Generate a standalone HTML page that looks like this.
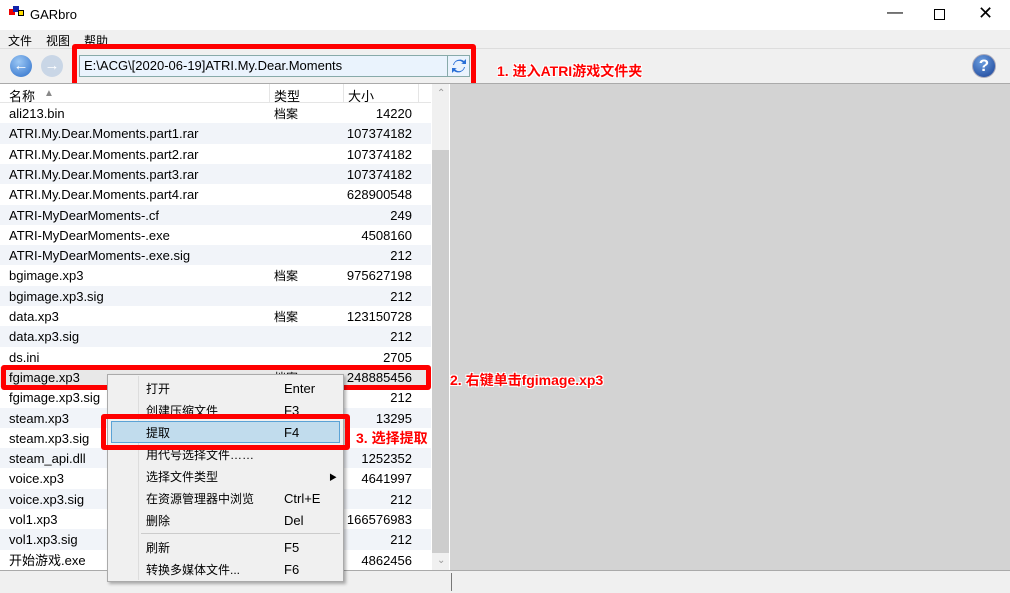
<!DOCTYPE html>
<html><head><meta charset="utf-8"><style>
*{margin:0;padding:0;box-sizing:border-box}
body{width:1010px;height:593px;position:relative;overflow:hidden;background:#f0f0f0;font-family:"Liberation Sans","Noto Sans CJK SC",sans-serif;font-size:12px;color:#000}
.a{position:absolute}
.row{position:absolute;left:0;width:431px;height:20.3px;line-height:22px;font-size:13px}
.row span{position:absolute}
.n{left:9px}.t{left:274px;font-size:12px}.s{right:19px}
.sh{background:#f1f4f9}
.ann{position:absolute;color:#f00;font-weight:bold;font-size:14px;text-shadow:1px 1px 0 #fff,-1px -1px 0 #fff,1px -1px 0 #fff,-1px 1px 0 #fff}
.redbox{position:absolute;border:5px solid #f00;border-radius:3px}
.mi{position:absolute;left:146px;height:22px;line-height:24px}
.mk{position:absolute;left:284px;line-height:24px;font-size:13px}
</style></head><body>
<div class="a" style="left:0;top:0;width:1010px;height:30px;background:#fff"></div>
<div class="a" style="left:9px;top:9px;width:6px;height:6px;background:#e00"></div>
<div class="a" style="left:13px;top:6px;width:6px;height:6px;background:#12a"></div>
<div class="a" style="left:18px;top:10px;width:6px;height:6px;background:#fd0;border:1px solid #000"></div>
<div class="a" style="left:30px;top:7px;font-size:13px">GARbro</div>
<div class="a" style="left:887px;top:4px;font-size:16px">&#8212;</div>
<div class="a" style="left:934px;top:9px;width:11px;height:11px;border:1px solid #000"></div>
<div class="a" style="left:978px;top:3px;font-size:18px">&#10005;</div>
<div class="a" style="left:8px;top:32px">文件</div>
<div class="a" style="left:46px;top:32px">视图</div>
<div class="a" style="left:84px;top:32px">帮助</div>
<div class="a" style="left:0;top:48px;width:1010px;height:1px;background:#ddd"></div>
<div class="a" style="left:10px;top:55px;width:22px;height:22px;border-radius:50%;background:radial-gradient(circle at 40% 30%,#9cc8f5,#2c6ec9);color:#fff;font-size:15px;text-align:center;line-height:21px;font-weight:bold">&#8592;</div>
<div class="a" style="left:41px;top:55px;width:22px;height:22px;border-radius:50%;background:#c9d6e6;color:#fff;font-size:15px;text-align:center;line-height:21px;font-weight:bold">&#8594;</div>
<div class="a" style="left:79px;top:55px;width:391px;height:22px;background:#eaf3fd;border:1px solid #8aa;"></div>
<div class="a" style="left:84px;top:58px;font-size:13px">E:\ACG\[2020-06-19]ATRI.My.Dear.Moments</div>
<div class="a" style="left:447px;top:55px;width:1px;height:22px;background:#8aa"></div>
<svg class="a" style="left:451px;top:58px" width="16" height="16" viewBox="0 0 16 16"><path d="M3 7a5 5 0 0 1 9-2l-2 1h5V1l-2 2A7 7 0 0 0 2 7z" fill="#2a6fd6"/><path d="M13 9a5 5 0 0 1-9 2l2-1H1v5l2-2a7 7 0 0 0 11-4z" fill="#2a6fd6"/></svg>
<div class="redbox" style="left:72px;top:44px;width:404px;height:44px"></div>
<div class="ann" style="left:497px;top:61px">1. 进入ATRI游戏文件夹</div>
<div class="a" style="left:972px;top:54px;width:24px;height:24px;border-radius:50%;background:radial-gradient(circle at 40% 30%,#6c9fe0,#173f95);border:1px solid #aab;color:#fff;font-weight:bold;font-size:17px;text-align:center;line-height:22px">?</div>
<div class="a" style="left:0;top:83px;width:1010px;height:1px;background:#aaa"></div>
<div class="a" style="left:0;top:84px;width:432px;height:486px;background:#fff"></div>
<div class="a" style="left:0;top:84px;width:431px;height:19px;border-bottom:1px solid #e5e5e5"></div>
<div class="a" style="left:9px;top:86px;font-size:13px">名称</div>
<div class="a" style="left:44px;top:88px;color:#888;font-size:10px">&#9650;</div>
<div class="a" style="left:269px;top:84px;width:1px;height:19px;background:#e5e5e5"></div>
<div class="a" style="left:274px;top:86px;font-size:13px">类型</div>
<div class="a" style="left:343px;top:84px;width:1px;height:19px;background:#e5e5e5"></div>
<div class="a" style="left:348px;top:86px;font-size:13px">大小</div>
<div class="a" style="left:418px;top:84px;width:1px;height:19px;background:#e5e5e5"></div>
<div class="a" style="left:432px;top:84px;width:17px;height:486px;background:#f0f0f0"></div>
<div class="a" style="left:432px;top:150px;width:17px;height:403px;background:#cdcdcd"></div>
<div class="a" style="left:437px;top:88px;color:#999;font-size:10px">&#8963;</div>
<div class="a" style="left:437px;top:555px;color:#999;font-size:10px">&#8964;</div>
<div class="a" style="left:449px;top:84px;width:1px;height:486px;background:#fff"></div>
<div class="a" style="left:450px;top:84px;width:560px;height:486px;background:#d3d3d3"></div>
<div class="a" style="left:0;top:570px;width:1010px;height:1px;background:#aaa"></div>
<div class="a" style="left:451px;top:573px;width:1px;height:18px;background:#777"></div>

<div class="row" style="top:103px"><span class="n">ali213.bin</span><span class="t">档案</span><span class="s">14220</span></div>
<div class="row sh" style="top:123.3px"><span class="n">ATRI.My.Dear.Moments.part1.rar</span><span class="s">107374182</span></div>
<div class="row" style="top:143.6px"><span class="n">ATRI.My.Dear.Moments.part2.rar</span><span class="s">107374182</span></div>
<div class="row sh" style="top:163.9px"><span class="n">ATRI.My.Dear.Moments.part3.rar</span><span class="s">107374182</span></div>
<div class="row" style="top:184.2px"><span class="n">ATRI.My.Dear.Moments.part4.rar</span><span class="s">628900548</span></div>
<div class="row sh" style="top:204.5px"><span class="n">ATRI-MyDearMoments-.cf</span><span class="s">249</span></div>
<div class="row" style="top:224.8px"><span class="n">ATRI-MyDearMoments-.exe</span><span class="s">4508160</span></div>
<div class="row sh" style="top:245.1px"><span class="n">ATRI-MyDearMoments-.exe.sig</span><span class="s">212</span></div>
<div class="row" style="top:265.4px"><span class="n">bgimage.xp3</span><span class="t">档案</span><span class="s">975627198</span></div>
<div class="row sh" style="top:285.7px"><span class="n">bgimage.xp3.sig</span><span class="s">212</span></div>
<div class="row" style="top:306px"><span class="n">data.xp3</span><span class="t">档案</span><span class="s">123150728</span></div>
<div class="row sh" style="top:326.3px"><span class="n">data.xp3.sig</span><span class="s">212</span></div>
<div class="row" style="top:346.6px"><span class="n">ds.ini</span><span class="s">2705</span></div>
<div class="row" style="top:366.9px;background:#e8e8e8"><span class="n">fgimage.xp3</span><span class="t">档案</span><span class="s">248885456</span></div>
<div class="row" style="top:387.2px"><span class="n">fgimage.xp3.sig</span><span class="s">212</span></div>
<div class="row sh" style="top:407.5px"><span class="n">steam.xp3</span><span class="s">13295</span></div>
<div class="row" style="top:427.8px"><span class="n">steam.xp3.sig</span><span class="s">212</span></div>
<div class="row sh" style="top:448.1px"><span class="n">steam_api.dll</span><span class="s">1252352</span></div>
<div class="row" style="top:468.4px"><span class="n">voice.xp3</span><span class="s">4641997</span></div>
<div class="row sh" style="top:488.7px"><span class="n">voice.xp3.sig</span><span class="s">212</span></div>
<div class="row" style="top:509px"><span class="n">vol1.xp3</span><span class="s">166576983</span></div>
<div class="row sh" style="top:529.3px"><span class="n">vol1.xp3.sig</span><span class="s">212</span></div>
<div class="row" style="top:549.6px"><span class="n">开始游戏.exe</span><span class="s">4862456</span></div>

<div class="redbox" style="left:1px;top:365px;width:430px;height:25px"></div>
<div class="ann" style="left:450px;top:370px">2. 右键单击fgimage.xp3</div>

<div class="a" style="left:107px;top:374px;width:237px;height:208px;background:#f0f0f0;border:1px solid #aaa;box-shadow:2px 2px 3px rgba(0,0,0,.3)"></div>
<div class="a" style="left:138px;top:376px;width:1px;height:204px;background:#ddd"></div>
<div class="mi" style="top:377px">打开</div><div class="mk" style="top:377px">Enter</div>
<div class="mi" style="top:399px">创建压缩文件</div><div class="mk" style="top:399px">F3</div>
<div class="a" style="left:111px;top:421px;width:229px;height:22px;background:#c1dced;border:1px solid #5ba3d6"></div>
<div class="mi" style="top:421px">提取</div><div class="mk" style="top:421px">F4</div>
<div class="mi" style="top:443px">用代号选择文件……</div>
<div class="mi" style="top:465px">选择文件类型</div><div class="a" style="left:329px;top:472px;font-size:8px">&#9654;</div>
<div class="mi" style="top:487px">在资源管理器中浏览</div><div class="mk" style="top:487px">Ctrl+E</div>
<div class="mi" style="top:509px">删除</div><div class="mk" style="top:509px">Del</div>
<div class="a" style="left:141px;top:533px;width:199px;height:1px;background:#ccc"></div>
<div class="mi" style="top:536px">刷新</div><div class="mk" style="top:536px">F5</div>
<div class="mi" style="top:558px">转换多媒体文件...</div><div class="mk" style="top:558px">F6</div>

<div class="redbox" style="left:101px;top:414px;width:249px;height:36px"></div>
<div class="ann" style="left:356px;top:428px">3. 选择提取</div>
</body></html>
